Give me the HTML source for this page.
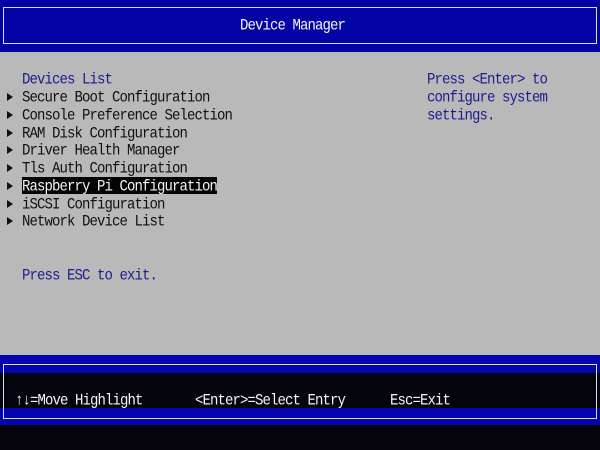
<!DOCTYPE html>
<html><head><style>
html,body{margin:0;padding:0;width:600px;height:450px;overflow:hidden;background:#b9b9b9;}
body{position:relative;font-family:"Liberation Mono",monospace;}
.t{position:absolute;font-size:14px;letter-spacing:-0.9px;white-space:pre;line-height:18px;height:18px;transform:scaleY(1.15);transform-origin:left center;}
.b{color:#1c1c90}
.k{color:#101010}
.w{color:#f4f4f4}
.arr{position:absolute;width:0;height:0;border-top:4px solid transparent;border-bottom:4px solid transparent;border-left:6px solid #111;left:7px;}
</style></head><body>
<div style="position:absolute;left:0;top:0;width:600px;height:52px;background:#0404a6"></div>
<div style="position:absolute;left:3px;top:7px;width:592px;height:35px;border:1px solid #dcdcf0"></div>
<div class="t w" style="left:240px;top:17px">Device Manager</div>

<div class="t b" style="left:22px;top:71px">Devices List</div>
<div class="t k" style="left:22px;top:89px">Secure Boot Configuration</div>
<div class="t k" style="left:22px;top:107px">Console Preference Selection</div>
<div class="t k" style="left:22px;top:125px">RAM Disk Configuration</div>
<div class="t k" style="left:22px;top:142px">Driver Health Manager</div>
<div class="t k" style="left:22px;top:160px">Tls Auth Configuration</div>
<div style="position:absolute;left:22px;top:177px;width:195px;height:17px;background:#050505"></div>
<div class="t w" style="left:22px;top:178px">Raspberry Pi Configuration</div>
<div class="t k" style="left:22px;top:196px">iSCSI Configuration</div>
<div class="t k" style="left:22px;top:213px">Network Device List</div>
<div class="arr" style="top:93px"></div>
<div class="arr" style="top:111px"></div>
<div class="arr" style="top:129px"></div>
<div class="arr" style="top:146px"></div>
<div class="arr" style="top:164px"></div>
<div class="arr" style="top:182px"></div>
<div class="arr" style="top:200px"></div>
<div class="arr" style="top:217px"></div>

<div class="t b" style="left:22px;top:267px">Press ESC to exit.</div>
<div class="t b" style="left:427px;top:71px">Press &lt;Enter&gt; to</div>
<div class="t b" style="left:427px;top:89px">configure system</div>
<div class="t b" style="left:427px;top:107px">settings.</div>

<div style="position:absolute;left:0;top:355px;width:600px;height:70px;background:#0404b0"></div>
<div style="position:absolute;left:0;top:373px;width:600px;height:35px;background:#04040c"></div>
<div style="position:absolute;left:3px;top:364px;width:592px;height:53px;border:1px solid #dcdcf0"></div>
<div style="position:absolute;left:0;top:425px;width:600px;height:25px;background:#04040a"></div>
<div class="t w" style="left:15px;top:392px">↑↓=Move Highlight</div>
<div class="t w" style="left:195px;top:392px">&lt;Enter&gt;=Select Entry</div>
<div class="t w" style="left:390px;top:392px">Esc=Exit</div>
</body></html>
